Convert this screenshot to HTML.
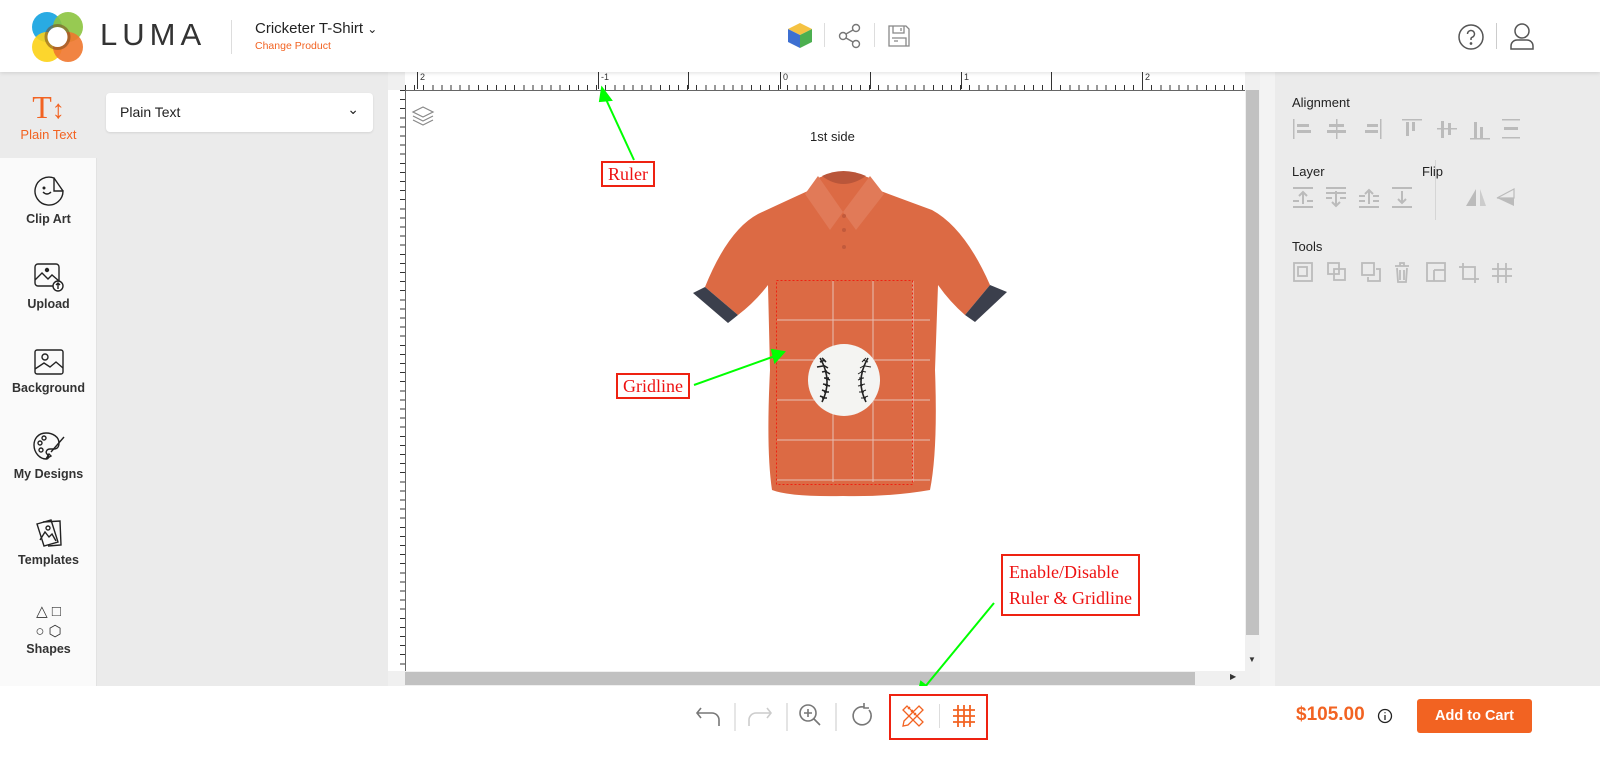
<!DOCTYPE html>
<html><head><meta charset="utf-8"><style>
*{box-sizing:border-box;margin:0;padding:0}
body{width:1600px;height:759px;overflow:hidden;font-family:"Liberation Sans",sans-serif;background:#fff;position:relative}
.abs{position:absolute}
.hdr{left:0;top:0;width:1600px;height:72px;background:#fff;box-shadow:0 1px 4px rgba(0,0,0,.12);z-index:5}
.side{left:0;top:72px;width:97px;height:614px;background:#fafafa;border-right:1px solid #e2e2e2}
.item{position:absolute;left:0;width:97px;text-align:center;font-size:12.5px;color:#333;font-weight:bold}
.panel{left:97px;top:72px;width:291px;height:614px;background:#ebebeb}
.rp{left:1260px;top:72px;width:340px;height:614px;background:#ebebeb}
.lbl{font-size:13px;color:#222}
.ann{position:absolute;border:2px solid #e21;background:#fff;color:#e11;font-family:"Liberation Serif",serif;font-size:18px;padding:0 5px;line-height:22px}
</style></head><body>
<div class="abs hdr">
 <svg class="abs" style="left:30px;top:10px" width="56" height="54" viewBox="0 0 56 54">
  <circle cx="17" cy="17" r="15" fill="#1ea7e1" opacity=".95"/><circle cx="38" cy="17" r="15" fill="#8cc43f" opacity=".9"/>
  <circle cx="17" cy="37" r="15" fill="#fcd116" opacity=".9"/><circle cx="38" cy="37" r="15" fill="#f0772e" opacity=".9"/>
  <circle cx="27.5" cy="27" r="13" fill="#7a4a1f" opacity=".55"/><circle cx="27.5" cy="27" r="10" fill="#fff"/>
 </svg>
 <div class="abs" style="left:100px;top:17px;font-size:31px;letter-spacing:5px;color:#333">LUMA</div>
 <div class="abs" style="left:231px;top:20px;width:1px;height:34px;background:#ddd"></div>
 <div class="abs" style="left:255px;top:20px;font-size:15px;color:#222">Cricketer T-Shirt <span style="font-size:12px">&#8964;</span></div>
 <div class="abs" style="left:255px;top:40px;font-size:10.5px;color:#f26322">Change Product</div>
 <svg class="abs" style="left:786px;top:21px" width="28" height="28" viewBox="0 0 28 28"><path d="M14 2 26 8 14 14 2 8Z" fill="#f5c242"/><path d="M2 8 14 14 14 27 2 21Z" fill="#3d6fd1"/><path d="M26 8 14 14 14 27 26 21Z" fill="#4caf50"/></svg>
 <div class="abs" style="left:824px;top:23px;width:1px;height:24px;background:#ddd"></div>
 <svg class="abs" style="left:837px;top:23px" width="26" height="26" viewBox="0 0 26 26" fill="none" stroke="#777" stroke-width="1.4"><circle cx="19" cy="5" r="3.5"/><circle cx="19" cy="21" r="3.5"/><circle cx="6" cy="13" r="3.5"/><path d="M9 11 16 7M9 15 16 19"/></svg>
 <div class="abs" style="left:874px;top:23px;width:1px;height:24px;background:#ddd"></div>
 <svg class="abs" style="left:887px;top:24px" width="24" height="24" viewBox="0 0 24 24" fill="none" stroke="#888" stroke-width="1.3"><path d="M2 2h17l3 3v17H2Z"/><path d="M6 2v7h11V2M14 4v3M5 14h14v8M7 17h4"/></svg>
 <svg class="abs" style="left:1457px;top:23px" width="28" height="28" viewBox="0 0 28 28" fill="none" stroke="#555" stroke-width="1.5"><circle cx="14" cy="14" r="12"/><path d="M10.5 11a3.5 3.5 0 1 1 4.5 3.3c-.8.3-1 .9-1 1.7v1"/><circle cx="14" cy="20.5" r=".6" fill="#555"/></svg>
 <div class="abs" style="left:1496px;top:23px;width:1px;height:26px;background:#ccc"></div>
 <svg class="abs" style="left:1508px;top:21px" width="28" height="30" viewBox="0 0 28 30" fill="none" stroke="#555" stroke-width="1.5"><circle cx="14" cy="10" r="7"/><path d="M3 28v-3a6 6 0 0 1 6-6h10a6 6 0 0 1 6 6v3Z"/></svg>
</div>

<div class="abs side">
 <div class="abs" style="left:0;top:0;width:97px;height:86px;background:#ebebeb"></div>
 <div class="item" style="top:18px;color:#f26322;font-weight:normal"><div style="font-family:'Liberation Serif',serif;font-size:32px;line-height:34px">T<span style="font-size:26px">&#8597;</span></div><div style="font-size:13px">Plain Text</div></div>
 <div class="item" style="top:103px"><svg width="34" height="34" viewBox="0 0 34 34" fill="none" stroke="#222" stroke-width="1.4"><path d="M22 3A14 14 0 1 0 31 16L22 16Z"/><path d="M22 3 31 16M11 17q4 4 8 0"/><circle cx="12" cy="13" r=".8" fill="#222"/></svg><div>Clip Art</div></div>
 <div class="item" style="top:188px"><svg width="34" height="34" viewBox="0 0 34 34" fill="none" stroke="#222" stroke-width="1.4"><rect x="3" y="4" width="24" height="22" rx="3"/><path d="M3 20l7-7 6 6 4-4 7 6"/><circle cx="15" cy="10" r="1.5" fill="#222"/><circle cx="26" cy="26" r="5" fill="#fff"/><path d="M26 29v-6M24 25l2-2 2 2"/></svg><div>Upload</div></div>
 <div class="item" style="top:274px"><svg width="34" height="32" viewBox="0 0 34 32" fill="none" stroke="#222" stroke-width="1.4"><rect x="3" y="4" width="28" height="24" rx="2"/><circle cx="13" cy="11" r="3"/><path d="M3 23l9-6 6 4 6-5 7 6"/></svg><div>Background</div></div>
 <div class="item" style="top:358px"><svg width="36" height="34" viewBox="0 0 36 34" fill="none" stroke="#222" stroke-width="1.4"><path d="M15 3C7 3 3 9 3 15c0 8 6 14 12 14 3 0 3-3 1-5s0-5 3-5h4c3 0 5-2 5-6C28 7 22 3 15 3Z"/><circle cx="9" cy="13" r="2"/><circle cx="13" cy="8" r="2"/><circle cx="10" cy="20" r="2"/><path d="M33 7 20 22M18 24l-3 5 5-3Z"/></svg><div>My Designs</div></div>
 <div class="item" style="top:444px"><svg width="34" height="34" viewBox="0 0 34 34" fill="none" stroke="#222" stroke-width="1.4"><path d="M5 8l14-4 7 22-14 4Z"/><path d="M11 6l17-1 1 24-13 1"/><circle cx="16" cy="12" r="2"/><path d="M8 24l5-8 4 5 3-3 4 7"/></svg><div>Templates</div></div>
 <div class="item" style="top:530px;font-size:12.5px"><div style="font-size:15px;line-height:20px;font-weight:normal">&#9651; &#9633;<br>&#9675; &#11041;</div><div>Shapes</div></div>
</div>

<div class="abs panel">
 <div class="abs" style="left:9px;top:21px;width:267px;height:39px;background:#fff;border-radius:4px;box-shadow:0 1px 2px rgba(0,0,0,.1);font-size:14px;color:#222;padding:11px 14px">Plain Text<span style="position:absolute;right:14px;top:8px;font-size:14px">&#8964;</span></div>
</div>

<div class="abs" style="left:388px;top:72px;width:872px;height:614px;background:#f0f0f0"></div>
<div class="abs" style="left:405px;top:72px;width:840px;height:19px;background:#fff;border-bottom:1px solid #666;background-image:repeating-linear-gradient(90deg,#333 0 1px,transparent 1px 9.1px);background-size:100% 5px;background-repeat:no-repeat;background-position:0 13px"></div>
<div class="abs" style="left:388px;top:90px;width:18px;height:581px;background:#fff;border-right:1px solid #666;background-image:repeating-linear-gradient(180deg,#333 0 1px,transparent 1px 9.1px);background-size:5px 100%;background-repeat:no-repeat;background-position:12px 0"></div>
<div class="abs" style="left:406px;top:91px;width:839px;height:580px;background:#fff"></div>
<div class="abs" style="left:417px;top:72px;font-size:9px;color:#333;border-left:1px solid #333;padding-left:2px;height:17px">2</div>
<div class="abs" style="left:598px;top:72px;font-size:9px;color:#333;border-left:1px solid #333;padding-left:2px;height:17px">-1</div>
<div class="abs" style="left:688px;top:72px;border-left:1px solid #333;height:17px"></div>
<div class="abs" style="left:780px;top:72px;font-size:9px;color:#333;border-left:1px solid #333;padding-left:2px;height:17px">0</div>
<div class="abs" style="left:870px;top:72px;border-left:1px solid #333;height:17px"></div>
<div class="abs" style="left:961px;top:72px;font-size:9px;color:#333;border-left:1px solid #333;padding-left:2px;height:17px">1</div>
<div class="abs" style="left:1051px;top:72px;border-left:1px solid #333;height:17px"></div>
<div class="abs" style="left:1142px;top:72px;font-size:9px;color:#333;border-left:1px solid #333;padding-left:2px;height:17px">2</div>
<svg class="abs" style="left:410px;top:104px" width="26" height="26" viewBox="0 0 26 26" fill="none" stroke="#888" stroke-width="1.2"><path d="M13 3 23 8 13 13 3 8Z"/><path d="M3 12l10 5 10-5M3 16l10 5 10-5"/></svg>
<div class="abs" style="left:810px;top:129px;font-size:13px;color:#222">1st side</div>
<div class="abs" style="left:1245px;top:72px;width:15px;height:599px;background:#f0f0f0"></div>
<div class="abs" style="left:1246px;top:90px;width:13px;height:545px;background:#c1c1c1"></div>
<div class="abs" style="left:1248px;top:655px;font-size:8px;color:#333">&#9660;</div>
<div class="abs" style="left:388px;top:671px;width:857px;height:15px;background:#f0f0f0"></div>
<div class="abs" style="left:405px;top:672px;width:790px;height:13px;background:#c1c1c1"></div>
<div class="abs" style="left:1230px;top:672px;font-size:8px;color:#333">&#9654;</div>

<svg class="abs" style="left:660px;top:150px" width="360" height="360" viewBox="0 0 360 360">
 <path d="M158 28 Q183 18 210 28 L218 40 Q245 50 272 60 Q305 78 330 135 L305 165 Q290 152 278 135 L275 220 Q278 300 270 340 Q230 347 183 346 Q130 347 112 340 Q106 300 110 220 L108 135 Q95 152 78 165 L45 137 Q68 80 98 64 Q128 50 150 40Z" fill="#dc6a44"/>
 <path d="M45 137 L78 165 L68 173 L33 143Z" fill="#3b3f4c"/>
 <path d="M330 135 L305 165 L315 172 L347 142Z" fill="#3b3f4c"/>
 <path d="M158 26 L183 62 L210 26 L224 44 L196 80 L183 62 L170 80 L145 44Z" fill="#e17a58"/>
 <path d="M162 26 Q183 42 206 26 Q183 16 162 26Z" fill="#b9563a"/>
 <circle cx="184" cy="66" r="2" fill="#c25a3c"/><circle cx="184" cy="80" r="2" fill="#c25a3c"/><circle cx="184" cy="97" r="2" fill="#c25a3c"/>
 <g stroke="#e8d0c8" stroke-width="1" opacity=".85"><path d="M173 131V332M213 131V332M253 131V332M116 170H270M116 210H270M116 250H270M116 290H270M116 330H270"/></g>
 <rect x="116.5" y="130.5" width="136" height="204" fill="none" stroke="#e21" stroke-dasharray="2 2"/>
 <circle cx="184" cy="230" r="36" fill="#f4f4f2"/>
 <g fill="none" stroke="#222" stroke-width="1.6"><path d="M160 208 Q173 230 162 252"/><path d="M208 208 Q195 230 206 252"/>
 <path d="M160 212l5-2M157 217l6-1M162 222l5-1M164 228l5 0M163 234l5 1M162 240l5 2M160 246l5 2M166 212l-4-4M168 218l-5-3M170 224l-5-3M170 230l-5-2M170 236l-5-1M169 242l-5 0M167 248l-5 0"/>
 <path d="M208 212l-5-2M211 217l-6-1M206 222l-5-1M204 228l-5 0M205 234l-5 1M206 240l-5 2M208 246l-5 2M202 212l4-4M200 218l5-3M198 224l5-3M198 230l5-2M198 236l5-1M199 242l5 0M201 248l5 0" stroke-width="1"/></g>
</svg>

<svg class="abs" style="left:0;top:0" width="1600" height="759" viewBox="0 0 1600 759"><g stroke="#0f0" stroke-width="2" fill="#0f0">
 <line x1="634" y1="160" x2="604" y2="95"/><path d="M602 88 611 100 600 101Z"/>
 <line x1="694" y1="385" x2="775" y2="356"/><path d="M784 352 772 350 775 362Z"/>
 <line x1="994" y1="603" x2="924" y2="688"/><path d="M918 695 921 682 930 689Z"/></g></svg>
<div class="ann" style="left:601px;top:161px">Ruler</div>
<div class="ann" style="left:616px;top:373px">Gridline</div>
<div class="ann" style="left:1001px;top:554px;line-height:26px;padding:3px 6px">Enable/Disable<br>Ruler &amp; Gridline</div>

<div class="abs rp">
 <div class="abs" style="left:0;top:0;width:15px;height:614px;background:#f3f3f3"></div>
 <div class="abs lbl" style="left:32px;top:23px">Alignment</div>
 <svg class="abs" style="left:32px;top:46px" width="230" height="24" viewBox="0 0 230 24" fill="#bbb"><rect x="1" y="1" width="1.5" height="20"/><rect x="5" y="6" width="12" height="3"/><rect x="5" y="12" width="14" height="3"/><rect x="44" y="1" width="1.5" height="20"/><rect x="37" y="6" width="15" height="3"/><rect x="35" y="12" width="19" height="3"/><rect x="88" y="1" width="1.5" height="20"/><rect x="75" y="6" width="11" height="3"/><rect x="73" y="12" width="13" height="3"/><rect x="110" y="1" width="20" height="1.5"/><rect x="114" y="4" width="3" height="14"/><rect x="120" y="4" width="3" height="9"/><rect x="145" y="10" width="20" height="1.5"/><rect x="149" y="3" width="3" height="17"/><rect x="156" y="5" width="3" height="12"/><rect x="178" y="20" width="20" height="1.5"/><rect x="182" y="4" width="3" height="16"/><rect x="188" y="9" width="3" height="11"/><rect x="210" y="1" width="18" height="1.5"/><rect x="212" y="9" width="14" height="3"/><rect x="210" y="19" width="18" height="1.5"/></svg>
 <div class="abs lbl" style="left:32px;top:92px">Layer</div>
 <div class="abs lbl" style="left:162px;top:92px">Flip</div>
 <div class="abs" style="left:175px;top:88px;width:1px;height:60px;background:#d5d5d5"></div>
 <svg class="abs" style="left:32px;top:114px" width="230" height="24" viewBox="0 0 230 24" fill="none" stroke="#bbb" stroke-width="2"><path d="M1 2h20M1 21h20M11 18V6M7 10l4-4 4 4M1 15h6M15 15h6"/><path d="M34 2h20M34 7h20M44 5v15M40 16l4 4 4-4M34 12h6M48 12h6"/><path d="M67 21h20M77 18V4M73 8l4-4 4 4M67 15h6M81 15h6M67 10h6M81 10h6"/><path d="M100 2h20M100 21h20M110 5v12M106 13l4 4 4-4"/><path d="M184 3 174 20h10Z" fill="#bbb" stroke="none"/><path d="M188 3v17h6Z" fill="#ccc" stroke="none"/><path d="M222 3 205 12h17Z" stroke-width="1.2"/><path d="M205 12h17v8Z" fill="#bbb" stroke="none"/></svg>
 <div class="abs lbl" style="left:32px;top:167px">Tools</div>
 <svg class="abs" style="left:32px;top:189px" width="230" height="24" viewBox="0 0 230 24" fill="none" stroke="#bbb" stroke-width="1.8"><rect x="2" y="2" width="18" height="18"/><rect x="6" y="6" width="9" height="9"/><rect x="36" y="2" width="11" height="11"/><rect x="42" y="8" width="11" height="11"/><path d="M70 14V2h12v12ZM84 8h4v12H76v-4"/><path d="M103 5h14M108 5V2h4v3M105 7l1 14h8l1-14M108 9v10M112 9v10"/><rect x="135" y="2" width="18" height="18"/><path d="M142 9h11M142 9v11"/><path d="M171 2v16h16M167 6h16v16"/><path d="M206 2v20M214 2v20M200 8h20M200 15h20"/></svg>
</div>

<div class="abs" style="left:0;top:686px;width:1600px;height:73px;background:#fff"></div>
<svg class="abs" style="left:695px;top:702px" width="300" height="30" viewBox="0 0 300 30" fill="none" stroke-width="1.6">
 <path d="M6 6 2 11l4 5M2 11h15a7 7 0 0 1 7 7v6" stroke="#777"/>
 <path d="M40 1v28" stroke="#e0e0e0"/>
 <path d="M72 6l4 5-4 5M76 11H61a7 7 0 0 0-7 7v6" stroke="#ccc"/>
 <path d="M92 1v28" stroke="#ddd"/>
 <circle cx="113" cy="11" r="8" stroke="#777"/><path d="M113 7v8M109 11h8M119 17l6 6" stroke="#777"/>
 <path d="M141 1v28" stroke="#ddd"/>
 <path d="M174 8a9 9 0 1 1-5-3M169 1v5h5" stroke="#777"/>
</svg>
<div class="abs" style="left:889px;top:694px;width:99px;height:46px;border:2px solid #e21"></div>
<svg class="abs" style="left:900px;top:703px" width="26" height="26" viewBox="0 0 26 26" fill="none" stroke="#f26322" stroke-width="1.3"><path d="M3 7 7 3 23 19 19 23Z"/><path d="M8 6l2-2M11 9l2-2M14 12l2-2"/><path d="M19 3l4 4L8 22l-5 1 1-5Z"/></svg>
<div class="abs" style="left:939px;top:704px;width:1px;height:24px;background:#ddd"></div>
<svg class="abs" style="left:952px;top:704px" width="24" height="24" viewBox="0 0 24 24" fill="none" stroke="#f26322" stroke-width="1.8"><path d="M6 1v22M12 1v22M18 1v22M1 6h22M1 12h22M1 18h22"/></svg>
<div class="abs" style="left:1296px;top:704px;font-size:19px;font-weight:bold;color:#f26322">$105.00</div>
<svg class="abs" style="left:1377px;top:708px" width="16" height="16" viewBox="0 0 16 16" fill="none" stroke="#222" stroke-width="1.3"><circle cx="8" cy="8" r="6.5"/><path d="M8 7v5M8 4.3v1"/></svg>
<div class="abs" style="left:1417px;top:699px;width:115px;height:34px;background:#f26322;border-radius:3px;color:#fff;font-size:14.5px;font-weight:bold;text-align:center;line-height:34px">Add to Cart</div>
</body></html>
